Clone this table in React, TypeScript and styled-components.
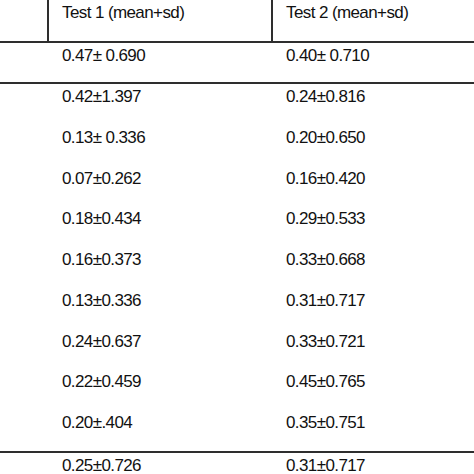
import React from "react";
import styled, { createGlobalStyle } from "styled-components";

const header = ["", "Test 1 (mean+sd)", "Test 2 (mean+sd)"];

const sections: string[][][] = [
  [["0.47± 0.690", "0.40± 0.710"]],
  [
    ["0.42±1.397", "0.24±0.816"],
    ["0.13± 0.336", "0.20±0.650"],
    ["0.07±0.262", "0.16±0.420"],
    ["0.18±0.434", "0.29±0.533"],
    ["0.16±0.373", "0.33±0.668"],
    ["0.13±0.336", "0.31±0.717"],
    ["0.24±0.637", "0.33±0.721"],
    ["0.22±0.459", "0.45±0.765"],
    ["0.20±.404", "0.35±0.751"],
  ],
  [["0.25±0.726", "0.31±0.717"]],
];

const App: React.FC = () => {
  return (
    <>
      <GlobalStyle />
      <Table>
        <HeaderRow>
          {header.map((h, i) => (
            <HeaderCell key={i} divided={i > 0}>
              {h}
            </HeaderCell>
          ))}
        </HeaderRow>
        {sections.map((rows, s) => (
          <Section key={s}>
            {rows.map((row, r) => (
              <Row key={r} tall={s === 1}>
                <Cell />
                {row.map((v, c) => (
                  <Cell key={c}>{v}</Cell>
                ))}
              </Row>
            ))}
          </Section>
        ))}
      </Table>
    </>
  );
};

export default App;

/**
 *
 * Styles
 *
 */

const GlobalStyle = createGlobalStyle`
  html, body {
    margin: 0;
    padding: 0;
    background: #ffffff;
    overflow: hidden;
  }
  body {
    font-family: "Liberation Sans", Arial, sans-serif;
    color: #111111;
  }
`;

const Table = styled.div`
  width: 474px;
  display: flex;
  flex-direction: column;
`;

const HeaderRow = styled.div`
  display: grid;
  grid-template-columns: 47px 224px 1fr;
  height: 41px;
`;

const HeaderCell = styled.div<{ divided?: boolean }>`
  border-left: ${({ divided }) => (divided ? "2px solid #2e2e2e" : "none")};
  padding: 3px 0 0 13px;
  font-size: 17px;
  line-height: 19px;
  letter-spacing: -0.6px;
`;

const Section = styled.div`
  border-top: 2px solid #2e2e2e;
  display: flex;
  flex-direction: column;
`;

const Row = styled.div<{ tall?: boolean }>`
  display: grid;
  grid-template-columns: 47px 224px 1fr;
  height: ${({ tall }) => (tall ? "40.75px" : "39px")};
`;

const Cell = styled.div`
  padding: 3px 0 0 15px;
  font-size: 17px;
  line-height: 19px;
  letter-spacing: -0.6px;
`;
